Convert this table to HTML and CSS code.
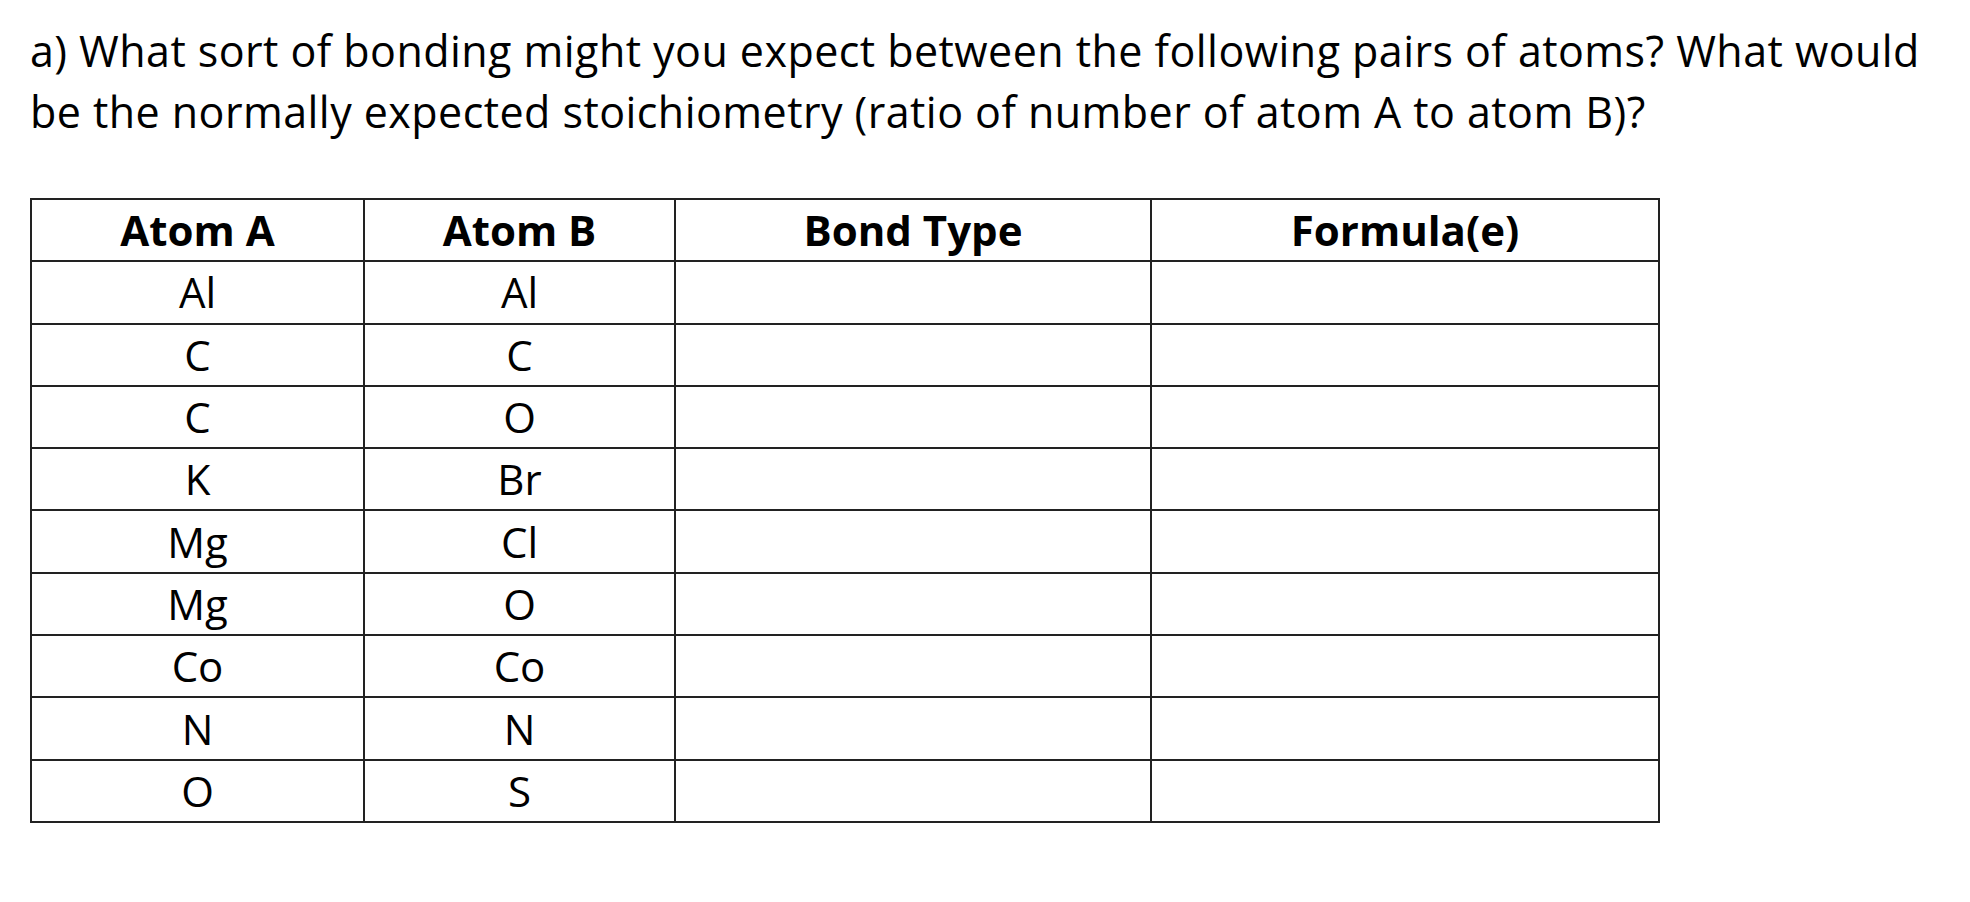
FILE: index.html
```html
<!DOCTYPE html>
<html lang="en">
<head>
<meta charset="utf-8">
<title>Bonding question</title>
<link rel="stylesheet" href="styles.css">
</head>
<body>
<main class="page">
  <p class="question">a) What sort of bonding might you expect between the following pairs of atoms? What would<br>be the normally expected stoichiometry (ratio of number of atom A to atom B)?</p>
  <table class="grid">
    <colgroup>
      <col class="c1"><col class="c2"><col class="c3"><col class="c4">
    </colgroup>
    <thead>
      <tr><th>Atom A</th><th>Atom B</th><th>Bond Type</th><th>Formula(e)</th></tr>
    </thead>
    <tbody>
      <tr><td>Al</td><td>Al</td><td></td><td></td></tr>
      <tr><td>C</td><td>C</td><td></td><td></td></tr>
      <tr><td>C</td><td>O</td><td></td><td></td></tr>
      <tr><td>K</td><td>Br</td><td></td><td></td></tr>
      <tr><td>Mg</td><td>Cl</td><td></td><td></td></tr>
      <tr><td>Mg</td><td>O</td><td></td><td></td></tr>
      <tr><td>Co</td><td>Co</td><td></td><td></td></tr>
      <tr><td>N</td><td>N</td><td></td><td></td></tr>
      <tr><td>O</td><td>S</td><td></td><td></td></tr>
    </tbody>
  </table>
</main>
</body>
</html>
```
FILE: styles.css
```css
html, body {
  margin: 0;
  padding: 0;
  background: #ffffff;
}

.page {
  padding: 20px 0 0 30px;
  font-family: "Open Sans", "Noto Sans", sans-serif;
  color: #000;
}

.question {
  margin: 0;
  font-size: 43px;
  letter-spacing: 0.45px;
  line-height: 61px;
  white-space: nowrap;
}

.grid {
  margin-top: 56px;
  border-collapse: collapse;
  table-layout: fixed;
  width: 1628px;
  font-size: 42px;
}

.c1 { width: 333px; }
.c2 { width: 311px; }
.c3 { width: 476px; }
.c4 { width: 508px; }

.grid th,
.grid td {
  border: 2px solid #222;
  height: 60.3px;
  padding: 0;
  text-align: center;
  vertical-align: middle;
  line-height: 1;
}

.grid th {
  font-weight: 700;
}

.grid td {
  font-weight: 400;
}
```
